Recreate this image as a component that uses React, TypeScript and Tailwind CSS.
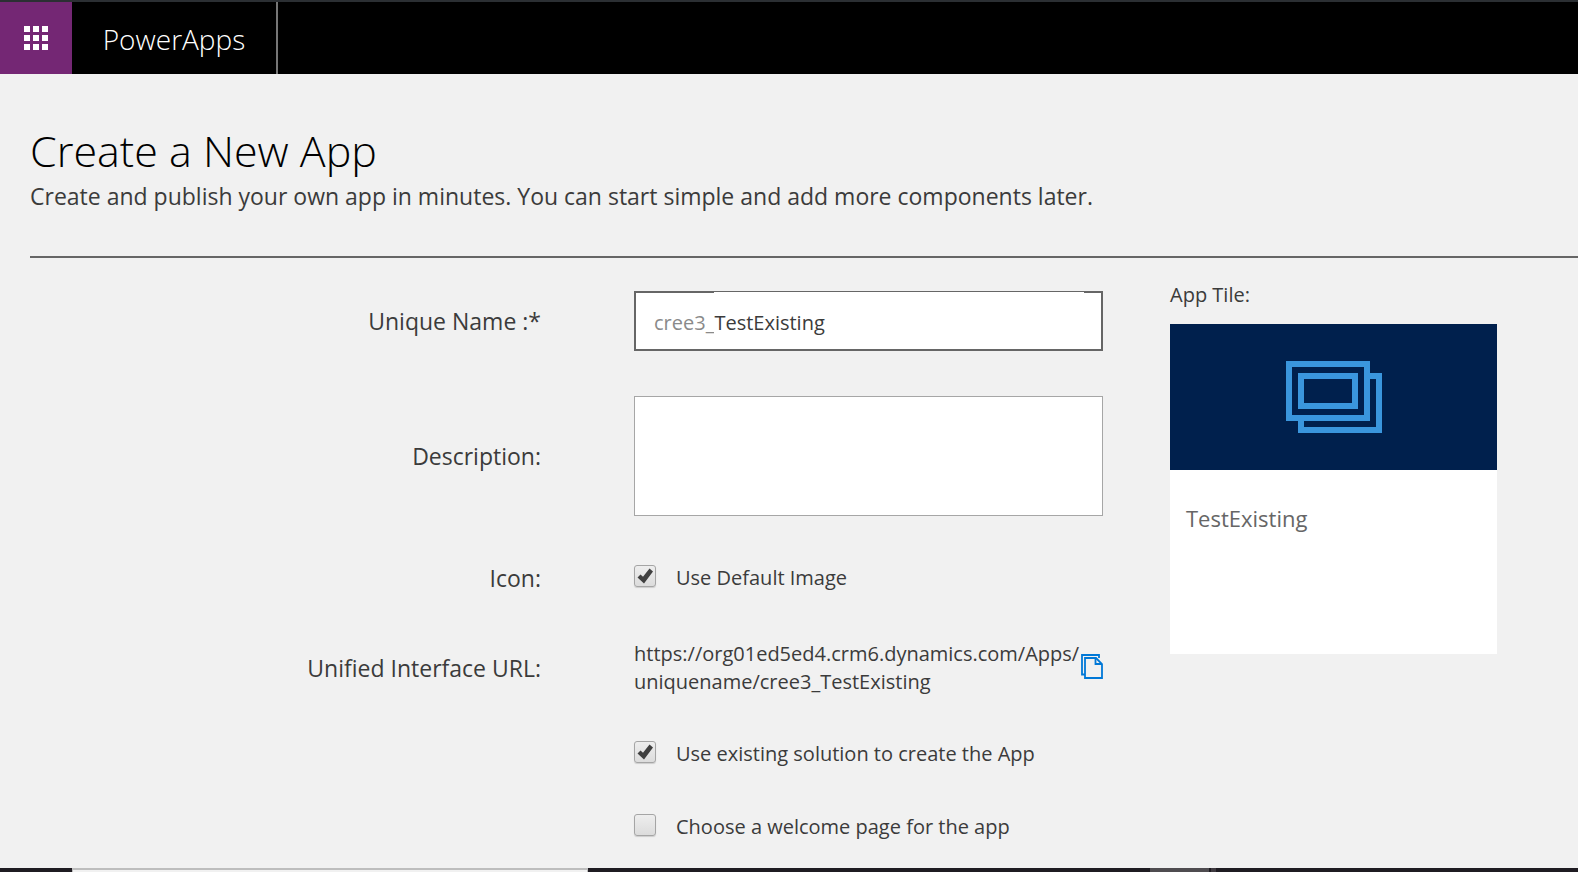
import { useState } from 'react';
import type { ReactNode } from 'react';

const PREFIX = 'cree3_';

function WaffleIcon() {
  return (
    <svg width="24" height="24" viewBox="0 0 24 24" fill="white" aria-hidden="true">
      {[0, 9, 18].map((y) => [0, 9, 18].map((x) => <rect key={`${x}-${y}`} x={x} y={y} width="6" height="6" />))}
    </svg>
  );
}

function AppTileIcon() {
  return (
    <svg width="96" height="72" viewBox="0 0 96 72" fill="none" stroke="#3a96dd" strokeWidth="6" aria-hidden="true">
      <path d="M3 3H81V57H3Z" />
      <path d="M15 15H69V45H15Z" />
      <path d="M84 15H93V69H15V60" />
    </svg>
  );
}

function CopyIcon() {
  return (
    <svg width="22" height="25" viewBox="0 0 22 25" fill="none" stroke="#0078d7" strokeWidth="1.8" aria-hidden="true">
      <path d="M4 20.5H1V1H18V4" />
      <path d="M4 4H15L21 10V24H4Z" />
      <path d="M14.5 4V10H21" />
    </svg>
  );
}

type CheckFieldProps = {
  id: string;
  label: string;
  defaultChecked?: boolean;
};

function CheckField({ id, label, defaultChecked }: CheckFieldProps) {
  return (
    <div className="flex h-8 items-center gap-5">
      <span className="relative flex size-[22px] flex-none">
        <input
          id={id}
          type="checkbox"
          defaultChecked={defaultChecked}
          className="peer size-[22px] appearance-none rounded-[3px] border border-[#a5a5a5] bg-linear-to-b from-[#eeeeee] to-[#dcdcdc] shadow-[0_1px_1px_rgba(0,0,0,0.15)]"
        />
        <svg
          viewBox="0 0 22 22"
          className="pointer-events-none absolute inset-0 hidden size-[22px] peer-checked:block"
          aria-hidden="true"
        >
          <path d="M3.5 12.5L6.5 9.5L9 11.7L15.5 3.5L19 6.5L10 18.5Z" fill="#404040" />
        </svg>
      </span>
      <label htmlFor={id} className="pt-1 text-xl leading-7">
        {label}
      </label>
    </div>
  );
}

type FieldRowProps = {
  label?: ReactNode;
  children: ReactNode;
};

function FieldRow({ label, children }: FieldRowProps) {
  return (
    <div className="grid grid-cols-[minmax(0,1fr)_469px] items-center gap-x-[93px]">
      <div className="text-right text-[23px] leading-8">{label}</div>
      <div>{children}</div>
    </div>
  );
}

export default function App() {
  const [name, setName] = useState('TestExisting');

  return (
    <div className="flex min-h-screen flex-col bg-[#f1f1f1] font-['Open_Sans',sans-serif] text-[#3b3b3b]">
      <header className="flex h-[74px] flex-none border-t-2 border-[#2b2f33] bg-black">
        <button type="button" aria-label="App launcher" className="flex w-[72px] items-center justify-center bg-[#742774]">
          <WaffleIcon />
        </button>
        <div className="flex w-[206px] items-center justify-center border-r-2 border-[#767676] pt-0.5">
          <a href="#" className="text-[28px] leading-9 font-light text-white">
            PowerApps
          </a>
        </div>
      </header>

      <main className="flex-1 pl-[30px]">
        <div className="border-b-2 border-[#666666] pt-12 pb-11">
          <h1 className="text-[43px] leading-[58px] font-light text-black">Create a New App</h1>
          <p className="text-[23px] leading-8">
            Create and publish your own app in minutes. You can start simple and add more components later.
          </p>
        </div>

        <div className="flex items-start gap-[67px] pr-[81px]">
          <form className="flex flex-1 flex-col pt-[33px] pb-6">
            <FieldRow label={<label htmlFor="unique-name">Unique Name :*</label>}>
              <div className="flex h-[60px] border-2 border-[#666666] bg-white pr-[17px] pl-[18px] text-xl">
                <span className="flex items-center pt-1 text-[#8a8a8a]">{PREFIX}</span>
                <input
                  id="unique-name"
                  type="text"
                  value={name}
                  onChange={(e) => setName(e.target.value)}
                  className="-mt-px min-w-0 flex-1 bg-white pt-1 outline-none"
                />
              </div>
            </FieldRow>

            <div className="mt-[45px]">
              <FieldRow label={<label htmlFor="description">Description:</label>}>
                <textarea
                  id="description"
                  className="block h-[120px] w-full resize-none border border-[#a6a6a6] bg-white p-4 text-xl outline-none"
                />
              </FieldRow>
            </div>

            <div className="mt-11">
              <FieldRow label={<span className="block h-8 pt-0.5">Icon:</span>}>
                <CheckField id="default-image" label="Use Default Image" defaultChecked />
              </FieldRow>
            </div>

            <div className="mt-12">
              <FieldRow label="Unified Interface URL:">
                <div className="flex items-center justify-between">
                  <p className="text-xl leading-7">
                    https://org01ed5ed4.crm6.dynamics.com/Apps/
                    <br />
                    uniquename/{PREFIX}
                    {name}
                  </p>
                  <button type="button" aria-label="Copy URL" className="flex-none pb-1">
                    <CopyIcon />
                  </button>
                </div>
              </FieldRow>
            </div>

            <div className="mt-10 flex flex-col gap-[41px]">
              <FieldRow>
                <CheckField id="existing-solution" label="Use existing solution to create the App" defaultChecked />
              </FieldRow>
              <FieldRow>
                <CheckField id="welcome-page" label="Choose a welcome page for the app" />
              </FieldRow>
            </div>
          </form>

          <aside className="w-[327px] flex-none pt-[23px]">
            <h2 className="text-xl leading-7">App Tile:</h2>
            <div className="mt-[15px] h-[330px] bg-white">
              <div className="flex h-[146px] items-center justify-center bg-[#00204d]">
                <AppTileIcon />
              </div>
              <p className="px-4 pt-8 text-[22px] leading-8 text-[#666666]">{name}</p>
            </div>
          </aside>
        </div>
      </main>

      {/* top edge of the desktop taskbar */}
      <footer className="flex h-1 flex-none bg-[#1f1c22] pl-[72px]">
        <div className="w-[516px] border-x border-t-2 border-[#bdbdbd] bg-[#f1f1f1]" />
        <div className="ml-[562px] w-[59px] bg-[#4f4c50]" />
        <div className="ml-[2px] w-[5px] bg-[#3f3a40]" />
      </footer>
    </div>
  );
}
